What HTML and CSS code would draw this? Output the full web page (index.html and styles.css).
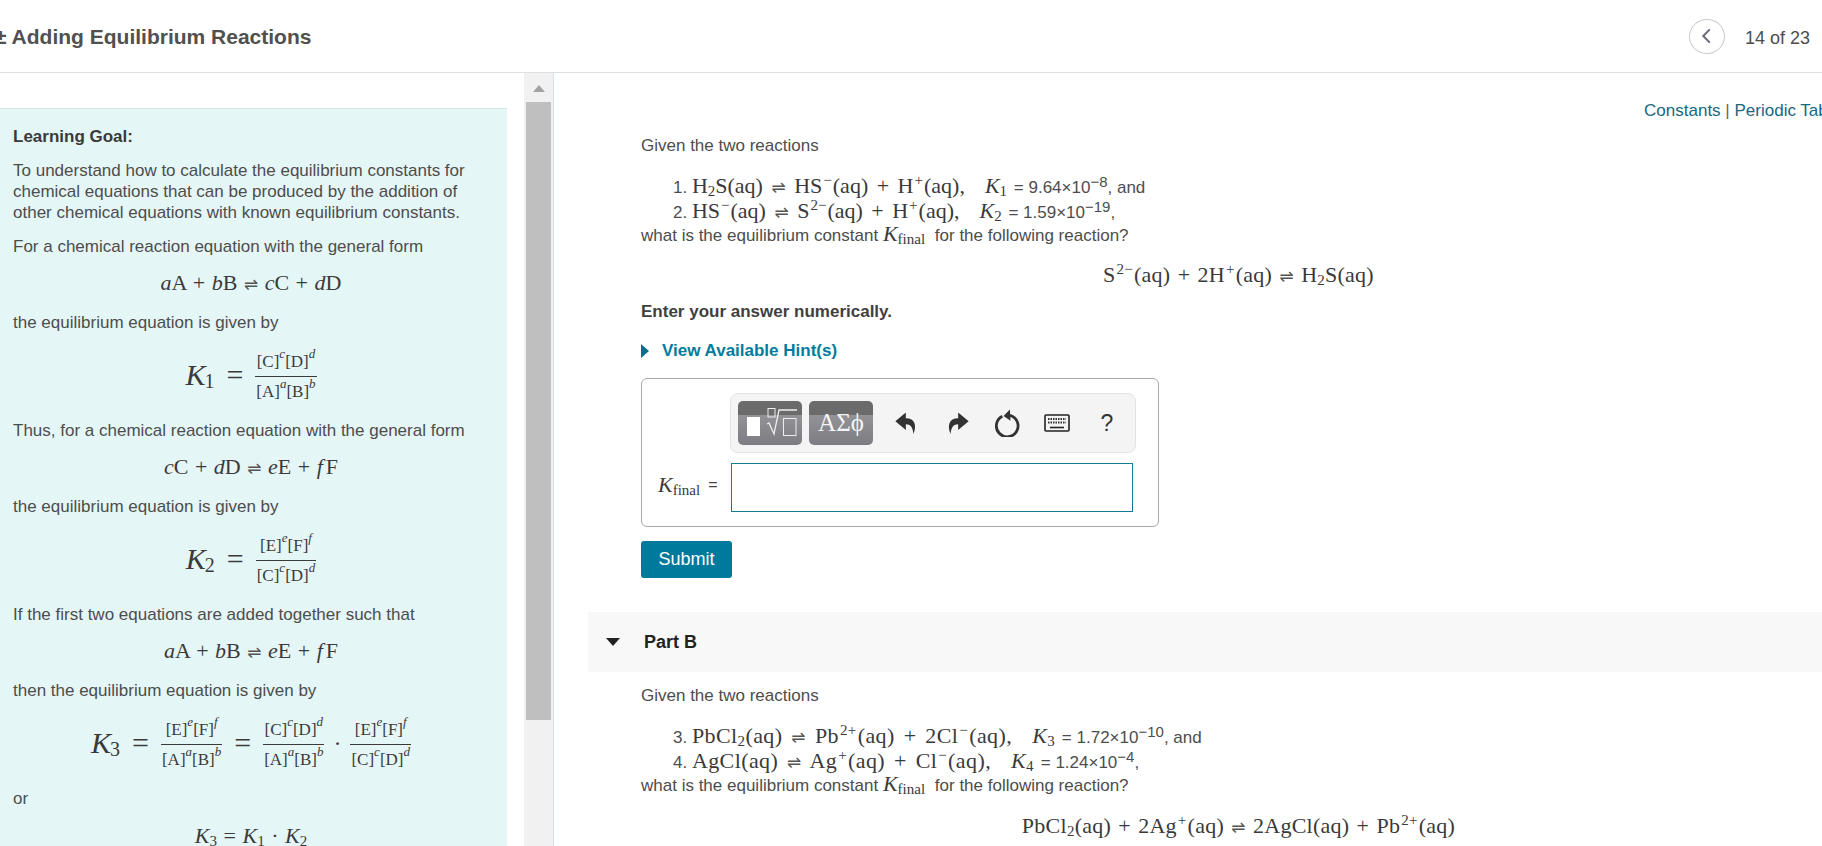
FILE: index.html
```html
<!DOCTYPE html>
<html lang="en">
<head>
<meta charset="utf-8">
<title>Adding Equilibrium Reactions</title>
<link rel="stylesheet" href="styles.css">
</head>
<body>
<header class="top">
  <h1 class="title">± Adding Equilibrium Reactions</h1>
  <div class="pager">
    <button class="back" aria-label="Previous"><svg viewBox="0 0 36 34" width="36" height="34"><path d="M21 10l-7 7 7 7" fill="none" stroke="#667" stroke-width="2"/></svg></button>
    <span>14 of 23</span>
  </div>
</header>
<main class="main">
  <aside class="side">
    <section class="goal">
      <p class="goal-h">Learning Goal:</p>
      <p>To understand how to calculate the equilibrium constants for chemical equations that can be produced by the addition of other chemical equations with known equilibrium constants.</p>
      <p>For a chemical reaction equation with the general form</p>
      <div class="m-line"><i>a</i>A + <i>b</i>B <span class="eq">⇌</span> <i>c</i>C + <i>d</i>D</div>
      <p>the equilibrium equation is given by</p>
      <div class="m-disp">
        <i class="big">K</i><sub class="bigsub">1</sub><span class="bigeq">=</span>
        <span class="frac"><span class="num">[C]<sup><i>c</i></sup>[D]<sup><i>d</i></sup></span><span class="den">[A]<sup><i>a</i></sup>[B]<sup><i>b</i></sup></span></span>
      </div>
      <p>Thus, for a chemical reaction equation with the general form</p>
      <div class="m-line"><i>c</i>C + <i>d</i>D <span class="eq">⇌</span> <i>e</i>E + <i class="ff">f</i>F</div>
      <p>the equilibrium equation is given by</p>
      <div class="m-disp">
        <i class="big">K</i><sub class="bigsub">2</sub><span class="bigeq">=</span>
        <span class="frac"><span class="num">[E]<sup><i>e</i></sup>[F]<sup><i>f</i></sup></span><span class="den">[C]<sup><i>c</i></sup>[D]<sup><i>d</i></sup></span></span>
      </div>
      <p>If the first two equations are added together such that</p>
      <div class="m-line"><i>a</i>A + <i>b</i>B <span class="eq">⇌</span> <i>e</i>E + <i class="ff">f</i>F</div>
      <p>then the equilibrium equation is given by</p>
      <div class="m-disp">
        <i class="big">K</i><sub class="bigsub">3</sub><span class="bigeq">=</span>
        <span class="frac"><span class="num">[E]<sup><i>e</i></sup>[F]<sup><i>f</i></sup></span><span class="den">[A]<sup><i>a</i></sup>[B]<sup><i>b</i></sup></span></span>
        <span class="bigeq">=</span>
        <span class="frac"><span class="num">[C]<sup><i>c</i></sup>[D]<sup><i>d</i></sup></span><span class="den">[A]<sup><i>a</i></sup>[B]<sup><i>b</i></sup></span></span>
        <span class="dot">·</span>
        <span class="frac"><span class="num">[E]<sup><i>e</i></sup>[F]<sup><i>f</i></sup></span><span class="den">[C]<sup><i>c</i></sup>[D]<sup><i>d</i></sup></span></span>
      </div>
      <p>or</p>
      <div class="m-line m-k"><i>K</i><sub>3</sub> = <i>K</i><sub>1</sub> · <i>K</i><sub>2</sub></div>
    </section>
    <div class="scroll">
      <span class="scroll-up"></span>
      <span class="scroll-thumb"></span>
    </div>
  </aside>
  <section class="content">
    <div class="links"><a class="tlink">Constants</a> <span class="pipe">|</span> <a class="tlink">Periodic Table</a></div>
    <div class="part">
      <p class="given">Given the two reactions</p>
      <ol class="rx">
        <li>1. <span class="m">H<sub>2</sub>S(aq) <span class="eq">⇌</span> HS<sup>−</sup>(aq) + H<sup>+</sup>(aq),</span><span class="m mk"><i>K</i><sub>1</sub></span> = 9.64×10<sup class="ts">−8</sup>, and</li>
        <li>2. <span class="m">HS<sup>−</sup>(aq) <span class="eq">⇌</span> S<sup>2−</sup>(aq) + H<sup>+</sup>(aq),</span><span class="m mk"><i>K</i><sub>2</sub></span> = 1.59×10<sup class="ts">−19</sup>,</li>
      </ol>
      <p class="ask">what is the equilibrium constant <span class="m"><i>K</i><sub>final</sub></span> for the following reaction?</p>
      <div class="center-eq m">S<sup>2−</sup>(aq) + 2H<sup>+</sup>(aq) <span class="eq">⇌</span> H<sub>2</sub>S(aq)</div>
      <p class="enter">Enter your answer numerically.</p>
      <p class="hint"><span class="tri-r"></span>View Available Hint(s)</p>
      <div class="answer">
        <label class="ans-label"><span class="m"><i>K</i><sub>final</sub></span> =</label>
        <div class="ans-col">
          <div class="toolbar">
            <button class="tb">
              <svg viewBox="0 0 64 44" width="64" height="44"><rect x="9" y="16" width="13" height="19" fill="#fff"/><rect x="30" y="7.500" width="7" height="8.500" fill="none" stroke="#eee" stroke-width="1"/><path d="M29 23l2-1 5 11 5-24h18" fill="none" stroke="#eee" stroke-width="1.300"/><rect x="45.500" y="17.500" width="12.500" height="17" fill="none" stroke="#eee" stroke-width="1"/></svg>
            </button>
            <button class="tb tb-txt">ΑΣϕ</button>
            <span class="tool tool-first"><svg class="ic" viewBox="0 0 24 24"><path d="M11 3L2 10.500 11 18v-5c4 0 6 2.500 6.500 8.500 3-7 1.500-13.500-6.500-13.500z" fill="#333"/></svg></span>
            <span class="tool"><svg class="ic flip" viewBox="0 0 24 24"><path d="M11 3L2 10.500 11 18v-5c4 0 6 2.500 6.500 8.500 3-7 1.500-13.500-6.500-13.500z" fill="#333"/></svg></span>
            <span class="tool"><svg class="ic" viewBox="0 0 24 24"><path d="M8 6.200a9.300 9.300 0 1 0 6.500-.7" fill="none" stroke="#333" stroke-width="2.400"/><path d="M14.500 0.500L9 6l6 4z" fill="#333"/></svg></span>
            <span class="tool"><svg viewBox="0 0 26 18" width="26" height="18"><rect x="1" y="1" width="24" height="16" rx="1" fill="#f4f4f4" stroke="#222" stroke-width="1.600"/><path d="M4 5h18M4 8.500h18" stroke="#333" stroke-width="2" stroke-dasharray="1.500 1"/><path d="M6 13.500h14" stroke="#222" stroke-width="1.600"/></svg></span>
            <span class="tool tool-q">?</span>
          </div>
          <input class="ans-input" type="text" aria-label="K final">
        </div>
      </div>
      <button class="submit">Submit</button>
    </div>
    <div class="band"><span class="tri-d"></span><span class="band-t">Part B</span></div>
    <div class="part part-b">
      <p class="given">Given the two reactions</p>
      <ol class="rx">
        <li>3. <span class="m">PbCl<sub>2</sub>(aq) <span class="eq">⇌</span> Pb<sup>2+</sup>(aq) + 2Cl<sup>−</sup>(aq),</span><span class="m mk"><i>K</i><sub>3</sub></span> = 1.72×10<sup class="ts">−10</sup>, and</li>
        <li>4. <span class="m">AgCl(aq) <span class="eq">⇌</span> Ag<sup>+</sup>(aq) + Cl<sup>−</sup>(aq),</span><span class="m mk"><i>K</i><sub>4</sub></span> = 1.24×10<sup class="ts">−4</sup>,</li>
      </ol>
      <p class="ask">what is the equilibrium constant <span class="m"><i>K</i><sub>final</sub></span> for the following reaction?</p>
      <div class="center-eq m">PbCl<sub>2</sub>(aq) + 2Ag<sup>+</sup>(aq) <span class="eq">⇌</span> 2AgCl(aq) + Pb<sup>2+</sup>(aq)</div>
    </div>
  </section>
</main>
</body>
</html>
```
FILE: styles.css
```css
* { box-sizing: border-box; }
html, body { margin: 0; height: 100%; overflow: hidden; background: #fff; }
body { font: 17px/21px "Liberation Sans", Arial, sans-serif; color: #4d4d4d; width: 1822px; height: 846px; }
p { margin: 0; }
sub, sup { line-height: 0; }

.top { height: 73px; border-bottom: 1px solid #dfe1e3; display: flex; justify-content: space-between; align-items: center; padding-right: 12px; }
.title { margin: 0 0 0 -5px; font-size: 21px; line-height: 24px; font-weight: bold; color: #505050; position: relative; top: 1px; }
.pager { display: flex; align-items: center; gap: 20px; color: #4d4d4d; font-size: 18px; padding-top: 5px; }
.back { width: 36px; height: 35px; padding: 0; border: 1px solid #c9cdcd; border-radius: 50%; background: #fff; display: flex; align-items: center; justify-content: center; margin-top: -5px; }

.main { display: flex; height: 773px; overflow: hidden; }
.side { width: 554px; flex: none; display: flex; border-right: 1px solid #d3e2ee; height: 100%; }
.goal { width: 507px; flex: none; margin-top: 35px; padding: 17px 12px 0 13px; background: #e5f6f7; border-top: 1px solid #d6e3e5; display: flex; flex-direction: column; gap: 13px; overflow: hidden; }
.goal-h { font-weight: bold; color: #3a3a3a; }
.m-line { height: 29px; text-align: center; font: 22px/26px "Liberation Serif", serif; word-spacing: 1px; color: #3a3a3a; padding-right: 6px; flex: none; }
.m-k { line-height: 27px; }
.m-line sub { font-size: 15px; vertical-align: -0.200em; }
.ff { margin-right: 3px; }
.m-disp { height: 61px; flex: none; display: flex; align-items: center; justify-content: center; font-family: "Liberation Serif", serif; color: #3a3a3a; padding-right: 6px; }
.big { font-size: 30px; margin-bottom: 5px; }
.bigsub { font-size: 20px; align-self: center; margin-top: 9px; margin-left: -1px; }
.bigeq { font-size: 30px; margin: 0 12px 5px; }
.dot { font-size: 24px; margin: 0 9px 2px; }
.frac { display: inline-flex; flex-direction: column; align-items: center; font-size: 17px; line-height: 29px; }
.frac sup { font-size: 13px; position: relative; top: -2px; }
.num { display: block; width: 100%; text-align: center; border-bottom: 1px solid #3a3a3a; padding: 0 1px; white-space: nowrap; }
.den { display: block; text-align: center; padding: 0 1px; white-space: nowrap; }

.scroll { margin-left: 17px; width: 29px; flex: none; background: #f1f1f1; display: flex; flex-direction: column; align-items: center; }
.scroll-up { width: 0; height: 0; margin-top: 12px; border-left: 6.500px solid transparent; border-right: 6.500px solid transparent; border-bottom: 7px solid #a3a3a3; }
.scroll-thumb { width: 25px; height: 618px; margin-top: 10px; background: #bfbfbf; }

.content { width: 1282px; flex: none; position: relative; padding-left: 34px; }
.links { text-align: right; margin: 27px -5px 0 0; height: 21px; color: #666; }
.tlink { color: #16687f; }
.pipe { color: #666; }
.part { padding: 14px 0 0 53px; }
.part-b { padding-top: 13px; }
.rx { margin: 0; padding: 17px 0 0 32px; list-style: none; }
.rx li { height: 25px; line-height: 26px; white-space: nowrap; }
.part-b .rx .m { letter-spacing: 0.400px; }
.m { font: 22px/26px "Liberation Serif", serif; word-spacing: 3px; color: #3a3a3a; }
.m sub { font-size: 15px; vertical-align: -0.200em; }
.m sup { font-size: 15px; vertical-align: 0.550em; margin: 0 1px; }
.mk { margin-left: 20px; margin-right: 2px; }
.ts { font-size: 15px; vertical-align: 0.400em; }
.eq { font-family: "DejaVu Sans", sans-serif; font-size: 17px; color: #555; }
.ask { margin-top: -2px; height: 21px; white-space: nowrap; }
.ask .m { margin-right: 5px; }
.center-eq { text-align: center; margin-top: 20px; height: 26px; word-spacing: 1.500px; letter-spacing: 0.250px; }
.part-b .center-eq { margin-top: 21px; }
.enter { margin-top: 13px; font-weight: bold; color: #3f3f3f; }
.hint { margin-top: 18px; font-weight: bold; color: #007c9e; display: flex; align-items: center; height: 21px; }
.tri-r { width: 0; height: 0; margin-right: 13px; border-top: 7.500px solid transparent; border-bottom: 7.500px solid transparent; border-left: 8px solid #0c6e8a; }
.answer { margin-top: 17px; width: 518px; height: 149px; border: 1px solid #a9a9a9; border-radius: 6px; padding: 14px 22px 14px 16px; display: flex; align-items: flex-end; }
.ans-label { width: 72px; flex: none; height: 49px; padding-bottom: 6px; display: flex; align-items: center; gap: 8px; font-size: 16px; color: #444; white-space: nowrap; }
.ans-col { width: 406px; flex: none; display: flex; flex-direction: column; gap: 10px; }
.toolbar { height: 60px; background: #f4f4f4; border: 1px solid #e2e2e2; border-radius: 8px; padding: 7px; display: flex; align-items: flex-start; gap: 7px; }
.tb { width: 64px; height: 44px; padding: 0; border: 0; border-radius: 5px; background: linear-gradient(#6b6b6b 0, #6b6b6b 14px, #929297 14px, #7c7c82 100%); flex: none; }
.tb svg { display: block; }
.tb-txt { color: #f4f4f4; font: 25px "Liberation Serif", serif; line-height: 44px; padding-bottom: 8px; }
.tool { width: 50px; height: 44px; flex: none; display: flex; align-items: center; justify-content: center; margin-left: -7px; }
.tool-first { margin-left: 2px; }
.tool-q { font-size: 23px; color: #333; }
.ic { width: 28px; height: 28px; }
.flip { transform: scaleX(-1); }
.ans-input { display: block; width: 402px; height: 49px; margin-left: 1px; border: 1px solid #147b96; background: #fff; outline: none; }
.submit { display: block; margin-top: 14px; width: 91px; height: 37px; border: 0; border-radius: 3px; background: #007a9c; color: #fff; font: 18px "Liberation Sans", Arial, sans-serif; }
.band { margin-top: 34px; height: 60px; background: #f8f8f8; display: flex; align-items: center; padding-left: 18px; }
.tri-d { width: 0; height: 0; margin-right: 24px; border-left: 7.500px solid transparent; border-right: 7.500px solid transparent; border-top: 8px solid #222; }
.band-t { font-weight: bold; color: #222; font-size: 18px; }
```
